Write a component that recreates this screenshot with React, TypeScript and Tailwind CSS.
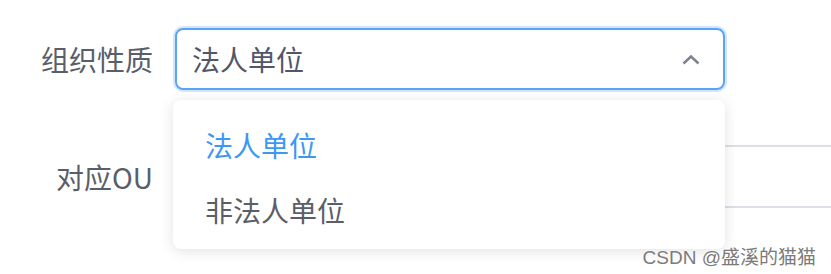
import React from "react"

export default function App() {
  const options = [
    { label: "法人单位", selected: true },
    { label: "非法人单位", selected: false },
  ]

  return (
    <div
      className="relative w-[831px] h-[274px] overflow-hidden bg-white"
      style={{ fontFamily: '"Noto Sans CJK SC", "Noto Sans", sans-serif' }}
    >
      {/* form */}
      <div className="flex flex-col pt-[28px]">
        {/* 组织性质 */}
        <div className="flex items-center">
          <label className="shrink-0 w-[175px] pr-[22px] text-right text-[28px] text-[#5a5e69] leading-none">
            组织性质
          </label>
          <div className="shrink-0 flex items-center justify-between w-[550px] h-[62px] rounded-[8px] border-2 border-[#5aa4f5] shadow-[0_0_0_2px_#d3e6fb] pl-[15px] pr-[20px]">
            <span className="text-[28px] text-[#52566a] leading-none">法人单位</span>
            <svg width="18" height="11" viewBox="0 0 18 11" className="mr-[3px]">
              <polyline
                points="1.5,9.5 9,2.5 16.5,9.5"
                fill="none"
                stroke="#7d8190"
                strokeWidth="2.4"
              />
            </svg>
          </div>
        </div>

        {/* 对应OU */}
        <div className="flex items-center mt-[55px]">
          <label className="shrink-0 w-[175px] pr-[22px] text-right text-[28px] text-[#5a5e69] leading-none">
            对应OU
          </label>
          <div className="shrink-0 w-[700px] h-[63px] rounded-[8px] border-2 border-[#dcdfe6]" />
        </div>
      </div>

      {/* dropdown */}
      <div className="absolute left-[173px] top-[100px] w-[552px] h-[149px] rounded-[8px] bg-white shadow-[0_2px_14px_rgba(0,0,0,0.12)] pt-[12px]">
        {options.map((o) => (
          <div
            key={o.label}
            className={
              "flex items-center h-[65px] pl-[32px] text-[28px] leading-none " +
              (o.selected ? "text-[#3d97f3]" : "text-[#5a5e69]")
            }
          >
            {o.label}
          </div>
        ))}
      </div>

      {/* watermark */}
      <div
        className="absolute right-[15px] bottom-[7px] text-[19px] text-[#7a7a7a] leading-none"
        style={{
          fontFamily: '"Liberation Sans", "Noto Sans CJK SC", sans-serif',
          textShadow: "0 0 2px #fff, 0 0 2px #fff",
        }}
      >
        CSDN @盛溪的猫猫
      </div>
    </div>
  )
}
